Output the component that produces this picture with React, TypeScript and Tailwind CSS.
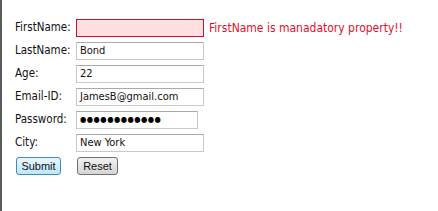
import React, { useState } from "react";

type Field = {
  label: string;
  value: string;
  type?: string;
  width: string;
};

const fields: Field[] = [
  { label: "LastName:", value: "Bond", width: "w-[128px]" },
  { label: "Age:", value: "22", width: "w-[128px]" },
  { label: "Email-ID:", value: "JamesB@gmail.com", width: "w-[128px]" },
  { label: "Password:", value: "●●●●●●●●●●●●", type: "password", width: "w-[122px]" },
  { label: "City:", value: "New York", width: "w-[128px]" },
];

export default function App() {
  const [first, setFirst] = useState("");

  return (
    <div className="w-[438px] h-[211px] bg-white border-l-2 border-[#5a5a5a] font-['DejaVu_Sans_Condensed','DejaVu_Sans',sans-serif] text-[11px] text-[#111]">
      <div className="pl-[13px] pt-[19px] flex flex-col gap-[5px]">
        <div className="flex items-center h-[18px]">
          <label className="w-[61px] text-[11.5px]">FirstName:</label>
          <input
            className="w-[128px] h-[18px] border border-[#c8102e] bg-[#ffe0e0] px-[3px] outline-none"
            value={first}
            onChange={(e) => setFirst(e.target.value)}
          />
          <span className="ml-[5px] text-[12px] text-[#e0102a]">
            FirstName is manadatory property!!
          </span>
        </div>
        {fields.map((f) => (
          <div key={f.label} className="flex items-center h-[18px]">
            <label className="w-[61px] text-[11.5px]">{f.label}</label>
            <div
              className={`${f.width} h-[18px] border border-[#c9c9c9] border-t-[#a9a9a9] px-[3px] flex items-center ${
                f.type === "password" ? "text-[8px] tracking-[0.5px] text-black" : ""
              }`}
            >
              {f.value}
            </div>
          </div>
        ))}
        <div className="flex items-center h-[18px] font-['Liberation_Sans',Arial,sans-serif]">
          <button className="ml-[1px] w-[45px] h-[18px] border border-[#3c8fb5] rounded-[3px] bg-gradient-to-b from-[#eaf6fd] to-[#bee6fd] text-[11px] leading-none">
            Submit
          </button>
          <button className="ml-[16px] w-[41px] h-[18px] border border-[#707070] rounded-[3px] bg-gradient-to-b from-[#f2f2f2] to-[#d5d5d5] text-[11px] leading-none">
            Reset
          </button>
        </div>
      </div>
    </div>
  );
}
